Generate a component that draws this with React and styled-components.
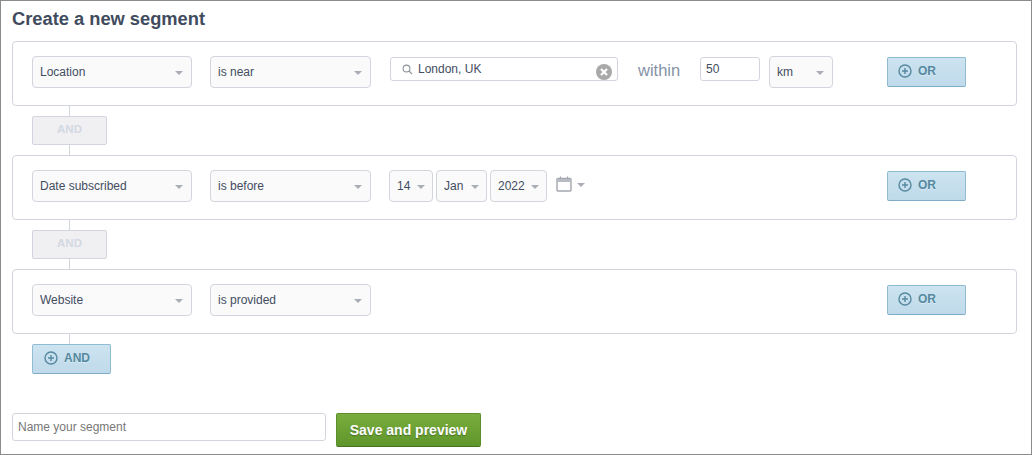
import React from "react"
import styled, { createGlobalStyle } from "styled-components"

const Global = createGlobalStyle`
  html, body {
    margin: 0;
    padding: 0;
    background: #fff;
  }
  * {
    box-sizing: border-box;
  }
`

const Page = styled.div`
  width: 1032px;
  height: 455px;
  border: 1px solid #8c8c8c;
  padding: 0 11px;
  overflow: hidden;
  font-family: "Liberation Sans", Arial, sans-serif;
  color: #3f4a5c;
`

const Title = styled.h1`
  margin: 0;
  height: 40px;
  padding-top: 8px;
  font-size: 18.3px;
  line-height: 20px;
  font-weight: 700;
  color: #404b5e;
`

const Rule = styled.div`
  width: 1005px;
  height: 65px;
  border: 1px solid #d3d5de;
  border-radius: 4px;
  padding: 14px 50px 0 19px;
  display: flex;
  align-items: flex-start;
`

const Fields = styled.div`
  display: flex;
  align-items: flex-start;
  flex: 1;
`

const Select = styled.div`
  width: ${p => p.$w}px;
  height: 32px;
  margin-right: ${p => p.$mr || 0}px;
  padding: 0 8px 0 7px;
  background: #fafafb;
  border: 1px solid #d3d5de;
  border-radius: 4px;
  display: flex;
  align-items: center;
  justify-content: space-between;
  font-size: 12px;
  color: #434d5f;
`

const Caret = styled.span`
  width: 0;
  height: 0;
  border-left: 4px solid transparent;
  border-right: 4px solid transparent;
  border-top: 4px solid #a9adb5;
  margin-top: 1px;
`

const SearchBox = styled.div`
  position: relative;
  width: 228px;
  height: 24px;
  margin: 1px 20px 0 1px;
  padding-left: 11px;
  border: 1px solid #d3d5de;
  border-radius: 3px;
  display: flex;
  align-items: center;
  gap: 5px;
  font-size: 12px;
  color: #434d5f;
`

const Clear = styled.svg`
  position: absolute;
  right: 5px;
  top: 6px;
`

const Within = styled.span`
  width: 62px;
  margin-top: 5px;
  font-size: 16.5px;
  line-height: 18px;
  color: #8592a6;
`

const NumberBox = styled.div`
  width: 60px;
  height: 24px;
  margin: 1px 9px 0 0;
  padding: 1px 0 0 5px;
  border: 1px solid #d3d5de;
  border-radius: 3px;
  font-size: 12px;
  line-height: 20px;
  color: #434d5f;
`

const DateSelect = styled(Select)`
  margin-right: 3px;
  padding: 0 7px;
`

const CalendarWrap = styled.div`
  display: flex;
  align-items: center;
  gap: 5px;
  margin: 6px 0 0 6px;
`

const AddButton = styled.button`
  width: ${p => p.$w}px;
  height: 30px;
  padding: 0 0 2px ${p => p.$pad}px;
  display: flex;
  align-items: center;
  gap: 6px;
  border: 1px solid #8fbbd3;
  border-bottom-color: #7eabc6;
  border-radius: 2px;
  background: linear-gradient(#cde3f0, #bfdaea);
  font-family: inherit;
  font-size: 12px;
  font-weight: 700;
  color: #55899f;
  text-shadow: 0 1px 0 rgba(255, 255, 255, 0.4);
`

const OrButton = styled(AddButton)`
  margin-top: 1px;
`

const Connector = styled.div`
  width: 75px;
  margin-left: 20px;
  height: 49px;
  display: flex;
  flex-direction: column;
  align-items: center;
  justify-content: center;
  background: linear-gradient(#d3d5de, #d3d5de) center / 1px 100% no-repeat;
`

const AndDisabled = styled.div`
  width: 75px;
  height: 29px;
  background: #f0f0f2;
  border: 1px solid #d3d5de;
  border-radius: 2px;
  text-align: center;
  font-size: 11.5px;
  font-weight: 700;
  line-height: 24px;
  color: #d3d8e2;
`

const LastConnector = styled.div`
  margin-left: 20px;
  height: 79px;
  padding-top: 10px;
  background: linear-gradient(#d3d5de, #d3d5de) 37px 0 / 1px 10px no-repeat;
`

const Footer = styled.div`
  display: flex;
  align-items: flex-start;
  gap: 10px;
`

const NameInput = styled.input`
  width: 314px;
  height: 28px;
  padding: 0 5px;
  margin: 0;
  border: 1px solid #d3d5de;
  border-radius: 3px;
  font-family: inherit;
  font-size: 12px;
  color: #434d5f;
  outline: none;

  &::placeholder {
    color: #777;
    opacity: 1;
  }
`

const SaveButton = styled.button`
  width: 145px;
  height: 34px;
  padding: 0;
  border: 1px solid #5a8f2a;
  border-bottom-color: #44751c;
  border-radius: 2px;
  background: linear-gradient(#79ad3d, #5f962b);
  color: #fff;
  font-family: inherit;
  font-size: 14px;
  font-weight: 700;
  text-shadow: 0 1px 1px rgba(0, 0, 0, 0.3);
`

const PlusIcon = () => (
  <svg width="14" height="14" viewBox="0 0 14 14" fill="none" stroke="#55899f">
    <circle cx="7" cy="7" r="6" strokeWidth="1.4" />
    <path d="M7 4v6M4 7h6" strokeWidth="1.4" />
  </svg>
)

const SearchIcon = () => (
  <svg width="11" height="11" viewBox="0 0 11 11" fill="none" stroke="#8e939c" strokeWidth="1.1">
    <circle cx="4.5" cy="4.5" r="3.4" />
    <path d="M7 7l3 3" />
  </svg>
)

const ClearIcon = () => (
  <Clear width="16" height="16" viewBox="0 0 16 16">
    <circle cx="8" cy="8" r="8" fill="#a9a9a9" />
    <path d="M5 5l6 6M11 5l-6 6" stroke="#fff" strokeWidth="2.2" />
  </Clear>
)

const CalendarIcon = () => (
  <svg width="16" height="16" viewBox="0 0 16 16" fill="none" stroke="#a3a6ae">
    <rect x="1" y="2.5" width="14" height="12.5" rx="1" strokeWidth="1.4" />
    <path d="M1 4.5h14" strokeWidth="3" stroke="#b9bbc2" />
    <path d="M4.5 0.5v2M11.5 0.5v2" strokeWidth="1.2" />
  </svg>
)

const Dropdown = ({ w, mr, children }) => (
  <Select $w={w} $mr={mr}>
    {children}
    <Caret />
  </Select>
)

const Or = () => (
  <OrButton $w={79} $pad={10}>
    <PlusIcon />
    OR
  </OrButton>
)

const App = () => (
  <Page>
    <Global />
    <Title>Create a new segment</Title>

    <Rule>
      <Fields>
        <Dropdown w={160} mr={18}>Location</Dropdown>
        <Dropdown w={161} mr={18}>is near</Dropdown>
        <SearchBox>
          <SearchIcon />
          London, UK
          <ClearIcon />
        </SearchBox>
        <Within>within</Within>
        <NumberBox>50</NumberBox>
        <Dropdown w={64}>km</Dropdown>
      </Fields>
      <Or />
    </Rule>
    <Connector><AndDisabled>AND</AndDisabled></Connector>

    <Rule>
      <Fields>
        <Dropdown w={160} mr={18}>Date subscribed</Dropdown>
        <Dropdown w={161} mr={18}>is before</Dropdown>
        <DateSelect $w={44}>14<Caret /></DateSelect>
        <DateSelect $w={51}>Jan<Caret /></DateSelect>
        <DateSelect $w={57}>2022<Caret /></DateSelect>
        <CalendarWrap>
          <CalendarIcon />
          <Caret />
        </CalendarWrap>
      </Fields>
      <Or />
    </Rule>
    <Connector><AndDisabled>AND</AndDisabled></Connector>

    <Rule>
      <Fields>
        <Dropdown w={160} mr={18}>Website</Dropdown>
        <Dropdown w={161}>is provided</Dropdown>
      </Fields>
      <Or />
    </Rule>
    <LastConnector>
      <AddButton $w={79} $pad={11}>
        <PlusIcon />
        AND
      </AddButton>
    </LastConnector>

    <Footer>
      <NameInput placeholder="Name your segment" />
      <SaveButton>Save and preview</SaveButton>
    </Footer>
  </Page>
)

export default App
